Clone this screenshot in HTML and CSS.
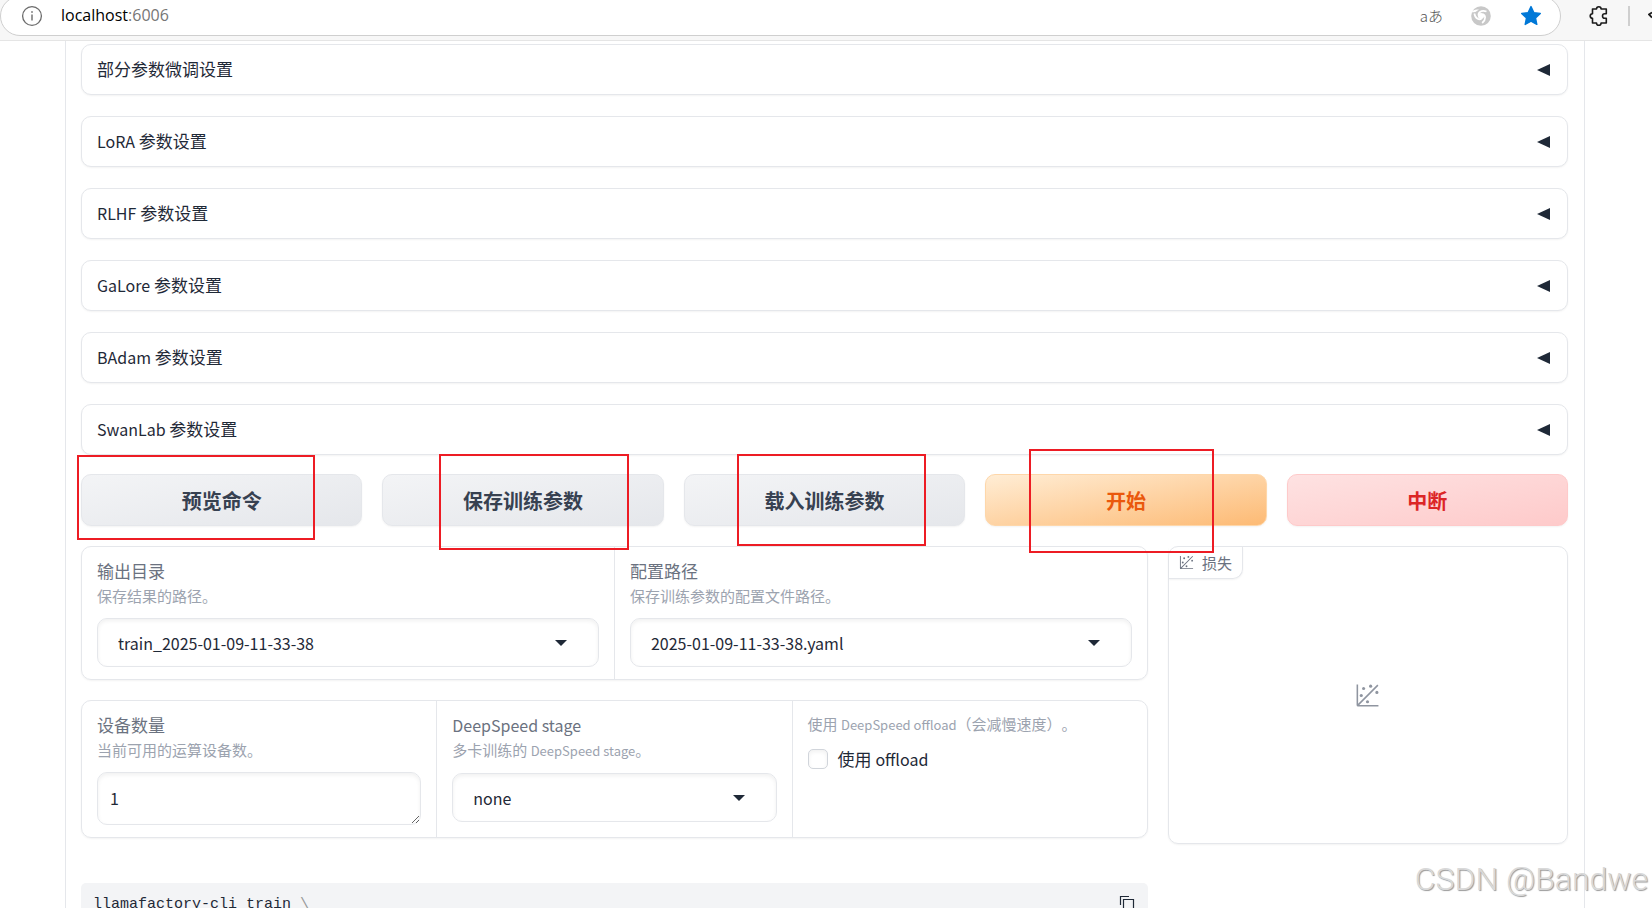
FILE: index.html
```
<!DOCTYPE html>
<html lang="zh-CN">
  <head>
    <title>LLaMA Board</title>
    <meta charset="utf-8" />
    <meta name="viewport" content="width=device-width, initial-scale=1.0" />
    <link rel="stylesheet" href="styles.css">
  </head>
  <body>
    <!-- Browser toolbar -->
    <header class="toolbar">
      <div class="address_bar">
        <svg class="icon_info" width="22" height="22" viewBox="0 0 22 22" fill="none" stroke="#6b6b6b">
          <circle cx="11" cy="11" r="9.4" stroke-width="1.3" />
          <path d="M11 9.5v6" stroke-width="1.4" />
          <path d="M11 6.2v1.6" stroke-width="1.6" />
        </svg>
        <div class="address">localhost<span class="port">:6006</span></div>
        <span class="translate">aあ</span>
        <svg width="20" height="20" viewBox="0 0 20 20">
          <circle cx="10" cy="10" r="9.8" fill="#c8c8c8" />
          <circle cx="10" cy="10" r="3" fill="#fff" />
          <g fill="none" stroke="#fff" stroke-width="1.7">
            <path d="M7.600 9.500C7 6.500 10 3.600 15.500 5.500" />
            <path d="M7.600 9.500C7 6.500 10 3.600 15.500 5.500" transform="rotate(120 10 10)" />
            <path d="M7.600 9.500C7 6.500 10 3.600 15.500 5.500" transform="rotate(240 10 10)" />
          </g>
          <path d="M0 6.500C2 3.500 5 3 8 3.600L4.500 6z" fill="#fff" />
        </svg>
        <svg class="icon_star" width="22" height="22" viewBox="0 0 22 22">
          <path d="M11 1.600l2.800 6 6.500.8-4.800 4.500 1.300 6.500L11 16.200l-5.800 3.200 1.300-6.500L1.700 8.400l6.500-.8z" fill="#0078d7" stroke="#0078d7" stroke-width="1.400" stroke-linejoin="round" />
        </svg>
      </div>
      <div class="toolbar_end">
        <svg width="22" height="22" viewBox="0 0 22 22" fill="none" stroke="#1b1b1b" stroke-width="1.600" stroke-linejoin="round">
          <path d="M4.500 4h4a2.300 2.300 0 0 1 4.600 0h5.200v4.700h-1.500a2.300 2.300 0 0 0 0 4.600h1.500V18h-5.200a2.300 2.300 0 0 1-4.600 0h-4v-4.700a2.300 2.300 0 0 1 0-4.600z" />
        </svg>
        <span class="separator"></span>
        <svg class="icon_cut" width="4" height="12" viewBox="0 0 4 12" fill="none" stroke="#1b1b1b" stroke-width="1.800">
          <path d="M4 2.500L1 4.500l3 3" />
        </svg>
      </div>
    </header>

    <main class="container">
      <div class="accordions">
        <button class="accordion">
          <span class="title">部分参数微调设置</span>
          <svg width="13" height="12" viewBox="0 0 13 12"><path d="M0 6L13 0v12z" /></svg>
        </button>
        <button class="accordion">
          <span class="title"><span class="latin">LoRA</span> 参数设置</span>
          <svg width="13" height="12" viewBox="0 0 13 12"><path d="M0 6L13 0v12z" /></svg>
        </button>
        <button class="accordion">
          <span class="title"><span class="latin">RLHF</span> 参数设置</span>
          <svg width="13" height="12" viewBox="0 0 13 12"><path d="M0 6L13 0v12z" /></svg>
        </button>
        <button class="accordion">
          <span class="title"><span class="latin">GaLore</span> 参数设置</span>
          <svg width="13" height="12" viewBox="0 0 13 12"><path d="M0 6L13 0v12z" /></svg>
        </button>
        <button class="accordion">
          <span class="title"><span class="latin">BAdam</span> 参数设置</span>
          <svg width="13" height="12" viewBox="0 0 13 12"><path d="M0 6L13 0v12z" /></svg>
        </button>
        <button class="accordion">
          <span class="title"><span class="latin">SwanLab</span> 参数设置</span>
          <svg width="13" height="12" viewBox="0 0 13 12"><path d="M0 6L13 0v12z" /></svg>
        </button>
      </div>

      <!-- Action buttons, the marks are drawn over them -->
      <div class="actions">
        <div class="action">
          <button class="btn btn_secondary">预览命令</button>
          <span class="mark mark_preview"></span>
        </div>
        <div class="action">
          <button class="btn btn_secondary">保存训练参数</button>
          <span class="mark mark_save"></span>
        </div>
        <div class="action">
          <button class="btn btn_secondary">载入训练参数</button>
          <span class="mark mark_load"></span>
        </div>
        <div class="action">
          <button class="btn btn_primary">开始</button>
          <span class="mark mark_start"></span>
        </div>
        <div class="action">
          <button class="btn btn_stop">中断</button>
        </div>
      </div>

      <div class="panels">
        <div class="settings">
          <div class="group">
            <div class="field">
              <label class="field_label" for="output_dir">输出目录</label>
              <p class="field_info">保存结果的路径。</p>
              <div class="dropdown">
                <select id="output_dir">
                  <option>train_2025-01-09-11-33-38</option>
                </select>
                <svg width="12" height="6" viewBox="0 0 12 6"><path d="M0 0h12L6 6z" /></svg>
              </div>
            </div>
            <div class="field">
              <label class="field_label" for="config_path">配置路径</label>
              <p class="field_info">保存训练参数的配置文件路径。</p>
              <div class="dropdown">
                <select id="config_path">
                  <option>2025-01-09-11-33-38.yaml</option>
                </select>
                <svg width="12" height="6" viewBox="0 0 12 6"><path d="M0 0h12L6 6z" /></svg>
              </div>
            </div>
          </div>

          <div class="group">
            <div class="field">
              <label class="field_label" for="device_count">设备数量</label>
              <p class="field_info">当前可用的运算设备数。</p>
              <textarea id="device_count" rows="1">1</textarea>
            </div>
            <div class="field">
              <label class="field_label" for="ds_stage"><span class="latin">DeepSpeed stage</span></label>
              <p class="field_info">多卡训练的 <span class="latin">DeepSpeed stage</span>。</p>
              <div class="dropdown">
                <select id="ds_stage">
                  <option>none</option>
                </select>
                <svg width="12" height="6" viewBox="0 0 12 6"><path d="M0 0h12L6 6z" /></svg>
              </div>
            </div>
            <div class="field">
              <p class="field_info">使用 <span class="latin">DeepSpeed offload</span>（会减慢速度）。</p>
              <label class="check">
                <input type="checkbox" />
                <span>使用 <span class="latin">offload</span></span>
              </label>
            </div>
          </div>

          <div class="code">
            <pre>llamafactory-cli train <span class="escape">\</span></pre>
            <button class="copy" aria-label="复制">
              <svg width="17" height="17" viewBox="0 0 17 17" fill="none" stroke="#1f2937" stroke-width="1.200">
                <path d="M4.500 4.500h10v12h-10z" />
                <path d="M1.500 10V1.500H10" />
              </svg>
            </button>
          </div>
        </div>

        <div class="plot">
          <div class="plot_label">
            <svg width="15" height="15" viewBox="0 0 32 32" fill="currentColor">
              <circle cx="20" cy="4" r="2" />
              <circle cx="8" cy="16" r="2" />
              <circle cx="28" cy="12" r="2" />
              <circle cx="11" cy="7" r="2" />
              <circle cx="16" cy="24" r="2" />
              <path d="M30 3.413L28.586 2 4 26.585V2H2v26a2 2 0 0 0 2 2h26v-2H5.413z" />
            </svg>
            损失
          </div>
          <svg class="plot_empty" width="25" height="25" viewBox="0 0 32 32" fill="currentColor">
            <circle cx="20" cy="4" r="2" />
            <circle cx="8" cy="16" r="2" />
            <circle cx="28" cy="12" r="2" />
            <circle cx="11" cy="7" r="2" />
            <circle cx="16" cy="24" r="2" />
            <path d="M30 3.413L28.586 2 4 26.585V2H2v26a2 2 0 0 0 2 2h26v-2H5.413z" />
          </svg>
        </div>
      </div>
    </main>

    <div class="watermark">CSDN @Bandwe</div>
  </body>
</html>
```
FILE: styles.css
```
* {
  box-sizing: border-box;
}
body {
  margin: 0;
  height: 100vh;
  overflow: hidden;
  position: relative;
  display: flex;
  flex-direction: column;
  background-color: #fff;
  color: #1f2937;
  font-family: "Noto Sans CJK SC", sans-serif;
  font-size: 17px;
  text-spacing-trim: space-all;
}
p,
pre {
  margin: 0;
}
button,
select,
textarea {
  font-family: inherit;
  color: inherit;
}
svg {
  flex: none;
}
.latin {
  font-size: 16px;
}

/* Toolbar */
.toolbar {
  flex: none;
  display: flex;
  height: 41px;
  padding-bottom: 4px;
  align-items: flex-end;
  overflow: hidden;
  background-color: #f7f7f7;
  border-bottom: 1px solid #e5e5e5;
}
.address_bar {
  flex: 1;
  height: 40px;
  padding: 0 18px 0 20px;
  display: flex;
  align-items: center;
  background-color: #fff;
  border: 1px solid #cfcfcf;
  border-radius: 20px;
}
.address {
  flex: 1;
  margin-left: 18px;
  padding-bottom: 2px;
  font-family: "Open Sans", sans-serif;
  font-size: 16px;
  color: #000;
}
.port {
  color: #767676;
}
.translate {
  margin-right: 28px;
  padding-bottom: 2px;
  font-size: 15px;
  font-weight: 300;
  color: #555;
}
.icon_star {
  margin-left: 29px;
}
.toolbar_end {
  height: 40px;
  width: 91px;
  display: flex;
  align-items: center;
  justify-content: flex-end;
}
.separator {
  width: 2px;
  height: 20px;
  margin: 0 18px;
  background-color: #cfcfcf;
}

/* Page column */
.container {
  flex: 1;
  min-height: 0;
  margin: 0 67px 0 65px;
  padding: 3px 16px 0 15px;
  border: 1px solid #e5e7eb;
  border-width: 0 1px;
}
.accordions {
  display: flex;
  flex-direction: column;
  gap: 21px;
}
.accordion {
  display: flex;
  align-items: center;
  justify-content: space-between;
  height: 51px;
  padding: 0 17px 0 15px;
  background-color: #fff;
  border: 1px solid #e5e7eb;
  border-radius: 10px;
  box-shadow: 0 1px 2px rgba(0, 0, 0, 0.05);
  font-size: 17px;
  text-align: left;
}
.title {
  padding-bottom: 2px;
}
.accordion svg,
.dropdown svg {
  fill: #1f2937;
}

/* Buttons */
.actions {
  display: grid;
  grid-template-columns: repeat(5, 1fr);
  gap: 20px;
  margin: 19px 0 20px;
}
.action {
  position: relative;
}
.btn {
  display: block;
  width: 100%;
  height: 52px;
  border: 1px solid #e5e7eb;
  border-radius: 10px;
  box-shadow: 0 1px 2px rgba(0, 0, 0, 0.05);
  font-size: 20px;
  font-weight: bold;
}
.btn_secondary {
  background: linear-gradient(to bottom right, #f3f4f6, #e5e7eb);
  color: #374151;
}
.btn_primary {
  background: linear-gradient(to bottom right, #ffedd5, #fdba74);
  border-color: #fed7aa;
  color: #ea580c;
}
.btn_stop {
  background: linear-gradient(to bottom right, #fee2e2, #fecaca);
  border-color: #fecaca;
  color: #dc2626;
}
.mark {
  position: absolute;
  z-index: 2;
  border: 2px solid #ed1c24;
  pointer-events: none;
}
.mark_preview {
  left: -4px;
  top: -19px;
  width: 238px;
  height: 85px;
}
.mark_save {
  left: 57px;
  top: -20px;
  width: 190px;
  height: 96px;
}
.mark_load {
  left: 53px;
  top: -20px;
  width: 189px;
  height: 92px;
}
.mark_start {
  left: 44px;
  top: -25px;
  width: 185px;
  height: 104px;
}

/* Settings */
.panels {
  display: grid;
  grid-template-columns: 8fr 3fr;
  gap: 20px;
  align-items: start;
}
.settings {
  display: flex;
  flex-direction: column;
  gap: 20px;
}
.group {
  display: flex;
  border: 1px solid #e5e7eb;
  border-radius: 10px;
  box-shadow: 0 1px 2px rgba(0, 0, 0, 0.05);
}
.field {
  flex: 1;
  min-width: 0;
  padding: 11px 15px 12px;
}
.field + .field {
  border-left: 1px solid #e5e7eb;
}
.field_label {
  display: block;
  line-height: 26px;
  color: #6b7280;
}
.field_info {
  font-size: 15px;
  line-height: 24px;
  color: #9ca3af;
}
.field_info .latin {
  font-size: 13px;
}
.dropdown {
  display: grid;
  align-items: center;
  margin-top: 10px;
}
.dropdown select,
.dropdown svg {
  grid-area: 1 / 1;
}
.dropdown svg {
  justify-self: end;
  margin-right: 32px;
  pointer-events: none;
}
select,
textarea {
  width: 100%;
  border: 1px solid #e5e7eb;
  border-radius: 10px;
  background-color: #fff;
  box-shadow: inset 0 2px 4px rgba(0, 0, 0, 0.06);
  font-size: 16px;
}
select {
  appearance: none;
  height: 49px;
  padding: 0 48px 0 20px;
}
textarea {
  display: block;
  height: 53px;
  margin-top: 10px;
  padding: 12px;
  line-height: 27px;
  overflow: hidden;
}
.check {
  display: flex;
  align-items: center;
  gap: 10px;
  margin-top: 9px;
  line-height: 26px;
}
.check input {
  appearance: none;
  width: 20px;
  height: 20px;
  margin: 0;
  border: 1px solid #d1d5db;
  border-radius: 5px;
  box-shadow: inset 0 2px 4px rgba(0, 0, 0, 0.06);
}

/* Command preview */
.code {
  display: flex;
  justify-content: space-between;
  align-items: flex-start;
  margin-top: 25px;
  padding: 12px;
  background-color: #f3f4f6;
  border-radius: 5px;
}
.code pre {
  font-family: "Liberation Mono", monospace;
  font-size: 15px;
  line-height: 20px;
}
.escape {
  color: #999;
}
.copy {
  display: flex;
  padding: 0;
  border: 0;
  background: none;
}

/* Loss plot */
.plot {
  position: relative;
  display: flex;
  align-items: center;
  justify-content: center;
  height: 298px;
  border: 1px solid #e5e7eb;
  border-radius: 10px;
  box-shadow: 0 1px 2px rgba(0, 0, 0, 0.05);
}
.plot_label {
  position: absolute;
  top: 0;
  left: 0;
  display: flex;
  align-items: center;
  gap: 8px;
  height: 32px;
  padding: 0 10px;
  border: 1px solid #e5e7eb;
  border-width: 0 1px 1px 0;
  border-bottom-right-radius: 10px;
  box-shadow: 0 1px 2px rgba(0, 0, 0, 0.05);
  font-size: 15px;
  color: #6b7280;
}
.plot_empty {
  color: #8f95a0;
}

.watermark {
  position: absolute;
  right: 4px;
  bottom: 11px;
  font-family: Roboto, sans-serif;
  font-size: 32px;
  font-weight: 300;
  line-height: 36px;
  color: #d9d9d9;
  text-shadow: 1px 1px 1px #999;
}
```
